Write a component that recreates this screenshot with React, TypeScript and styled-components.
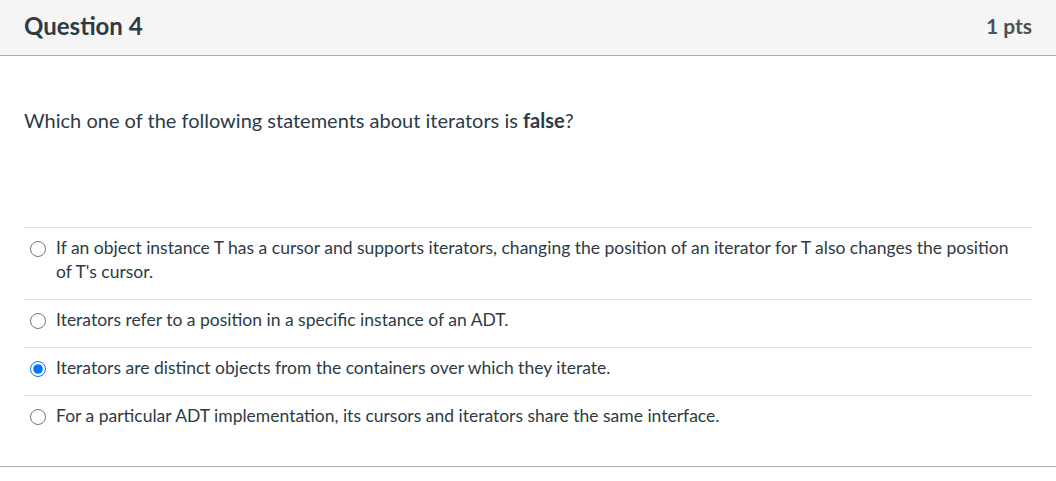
import React from "react";
import styled, { createGlobalStyle } from "styled-components";

const GlobalStyle = createGlobalStyle`
  html, body {
    margin: 0;
    padding: 0;
    background: #ffffff;
  }
  body {
    font-family: Lato, "Helvetica Neue", Arial, sans-serif;
    color: #2d3b45;
  }
`;

type Answer = {
  id: string;
  text: string;
  checked?: boolean;
};

const answers: Answer[] = [
  {
    id: "a1",
    text: "If an object instance T has a cursor and supports iterators, changing the position of an iterator for T also changes the position of T's cursor.",
  },
  { id: "a2", text: "Iterators refer to a position in a specific instance of an ADT." },
  {
    id: "a3",
    text: "Iterators are distinct objects from the containers over which they iterate.",
    checked: true,
  },
  {
    id: "a4",
    text: "For a particular ADT implementation, its cursors and iterators share the same interface.",
  },
];

export default function App() {
  return (
    <>
      <GlobalStyle />
      <Question>
        <Header>
          <Title>Question 4</Title>
          <Points>1 pts</Points>
        </Header>

        <Body>
          <Prompt>
            Which one of the following statements about iterators is <b>false</b>?
          </Prompt>

          <AnswerList>
            {answers.map((a) => (
              <AnswerRow key={a.id}>
                <Radio type="radio" name="q4" defaultChecked={a.checked} readOnly />
                <AnswerText>{a.text}</AnswerText>
              </AnswerRow>
            ))}
          </AnswerList>
        </Body>
      </Question>
    </>
  );
}

const Question = styled.div`
  width: 1056px;
  border-bottom: 1px solid #a8aeb2;
`;

const Header = styled.header`
  display: flex;
  align-items: center;
  justify-content: space-between;
  height: 56px;
  padding: 0 24px 4px;
  background: #f5f5f5;
  border-bottom: 1px solid #a8aeb2;
  box-sizing: border-box;
`;

const Title = styled.h2`
  margin: 0;
  font-size: 24px;
  font-weight: 700;
  color: #2d3b45;
`;

const Points = styled.span`
  font-size: 21px;
  font-weight: 700;
  color: #4b5358;
`;

const Body = styled.section`
  padding: 49px 24px 23px;
`;

const Prompt = styled.p`
  margin: 0 0 92px;
  font-size: 20px;
  line-height: 30px;

  > b {
    font-weight: 700;
  }
`;

const AnswerList = styled.div`
  display: flex;
  flex-direction: column;
`;

const AnswerRow = styled.label`
  display: flex;
  align-items: flex-start;
  gap: 10px;
  padding: 8px 0 15px 6px;
  border-top: 1px solid #dfe2e4;
  font-size: 17.5px;
  line-height: 24px;
`;

const Radio = styled.input`
  flex: none;
  width: 16px;
  height: 16px;
  margin: 5px 0 0;
`;

const AnswerText = styled.span`
  padding-right: 16px;
`;
